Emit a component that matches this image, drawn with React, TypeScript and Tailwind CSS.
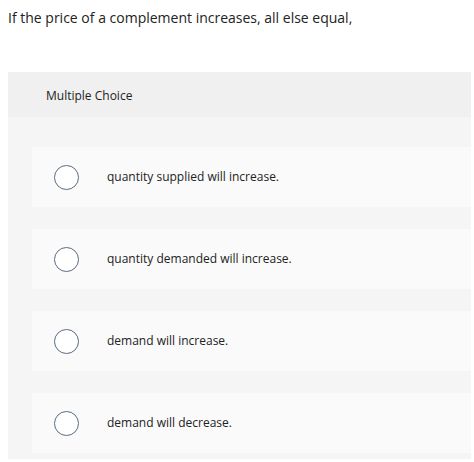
import React from "react";

const options = [
  "quantity supplied will increase.",
  "quantity demanded will increase.",
  "demand will increase.",
  "demand will decrease.",
];

export default function App() {
  return (
    <div
      className="w-[474px] h-[462px] bg-white text-[#222]"
      style={{ fontFamily: "'Open Sans', Lato, sans-serif", fontVariantLigatures: "none" }}
    >
      <div className="pl-[8px] pt-[8px] text-[14px] leading-[20px] text-[#222]">
        If the price of a complement increases, all else equal,
      </div>
      <div className="ml-[8px] mr-[3px] mt-[44px] bg-[#f5f5f5]">
        <div className="h-[45px] bg-[#f0f0f0] pl-[38px] flex items-center text-[12px] pt-[2px]">
          Multiple Choice
        </div>
        <div className="pt-[30px] pb-[6px] pl-[24px] flex flex-col gap-[22px]">
          {options.map((o) => (
            <div key={o} className="h-[60px] bg-[#fafafa] flex items-center">
              <div className="ml-[22px] w-[25px] h-[25px] rounded-full border-[1.5px] border-[#5b6b80] bg-white" />
              <div className="ml-[28px] text-[12px]">{o}</div>
            </div>
          ))}
        </div>
      </div>
    </div>
  );
}
